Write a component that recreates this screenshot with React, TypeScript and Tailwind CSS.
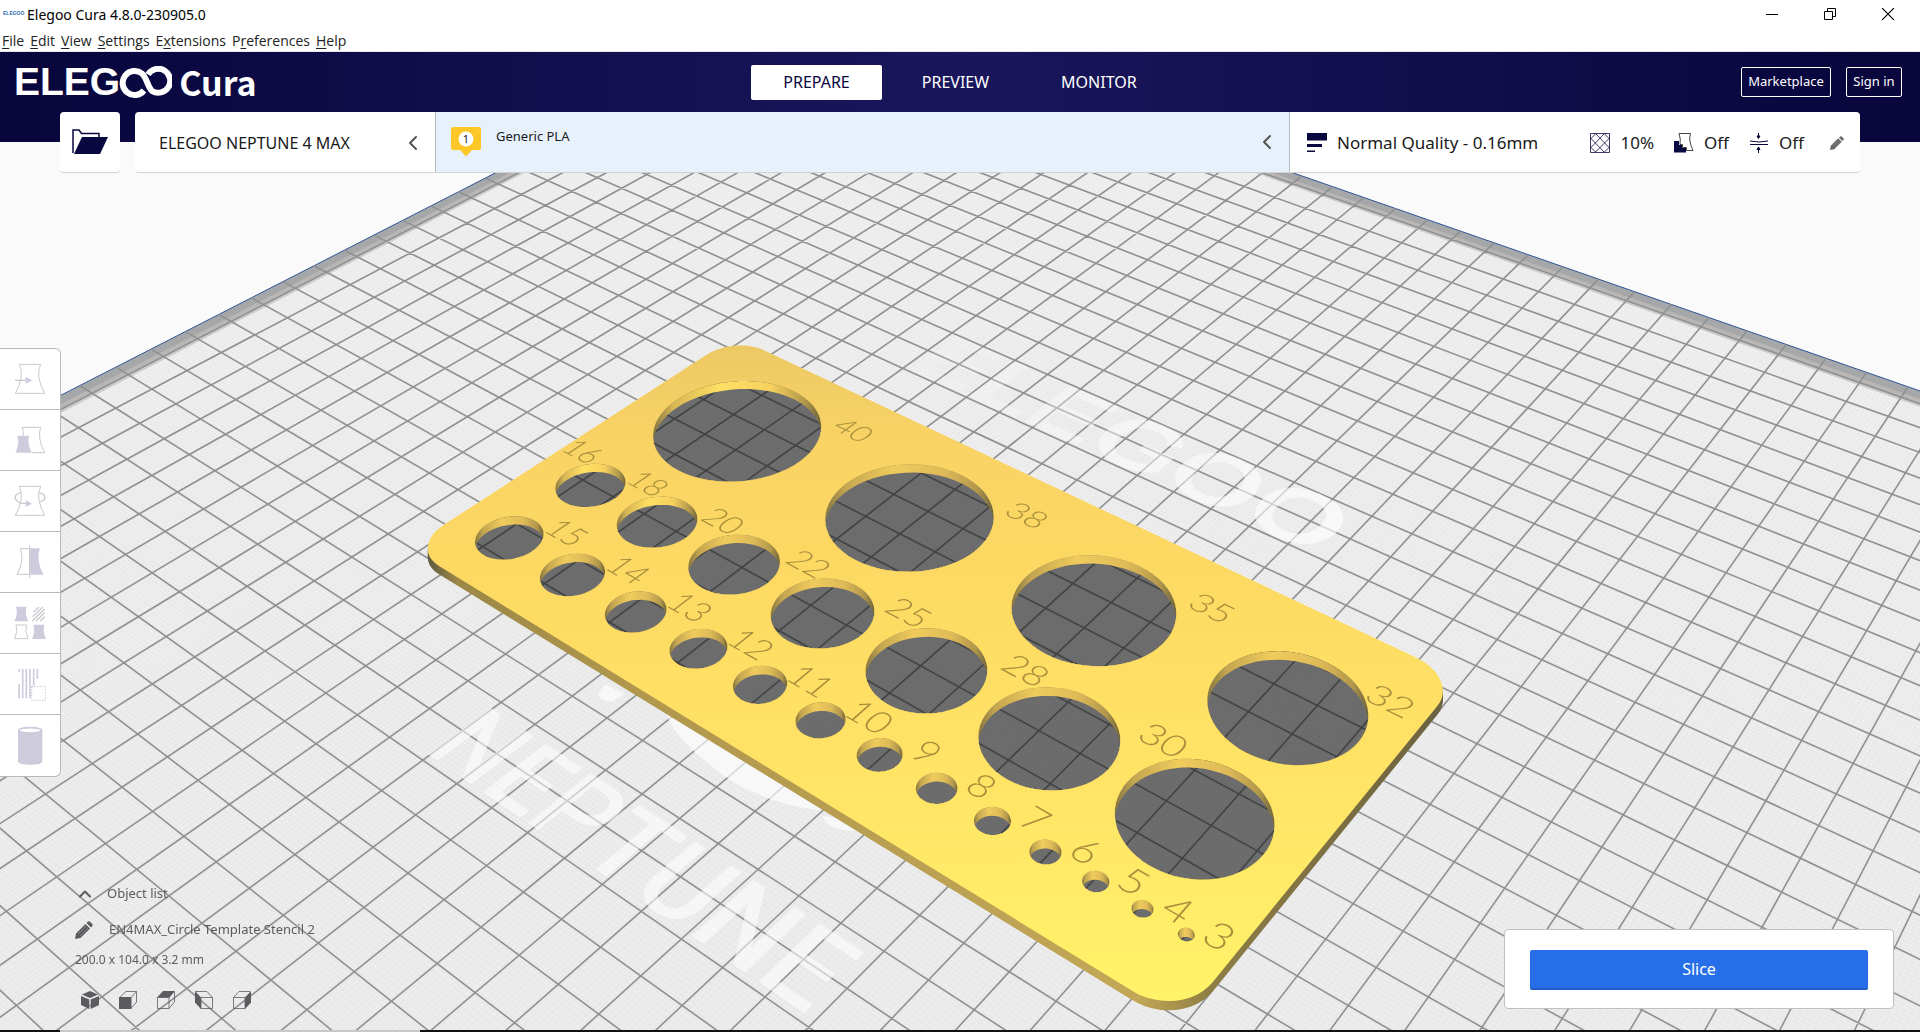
import { ReactNode } from 'react';
import { ChevronLeft, ChevronUp } from 'lucide-react';

type Point = [number, number];

// build plate -> screen, 1 unit on the plate is 10 mm
const CAMERA = [22.8768565, -38.702614, 78.5145068, 10.8865144, 14.0188128, 427.671322, -0.0105703514, -0.0135649169];

const project = (u: number, v: number): Point => {
	const w = CAMERA[6] * u + CAMERA[7] * v + 1;
	return [
		(CAMERA[0] * u + CAMERA[1] * v + CAMERA[2]) / w,
		(CAMERA[3] * u + CAMERA[4] * v + CAMERA[5]) / w,
	];
};

const toPath = (points: Point[]) => 'M' + points.map((p) => `${p[0].toFixed(1)} ${p[1].toFixed(1)}`).join('L') + 'Z';

// moves a point of the model's top face down by a part of its thickness
const sink = (p: Point, amount: number): Point => [p[0], p[1] + amount * (8 + (p[1] - 350) * 0.002)];

const line = (a: Point, b: Point) => `M${a[0].toFixed(1)} ${a[1].toFixed(1)}L${b[0].toFixed(1)} ${b[1].toFixed(1)}`;

const BED = { left: -1.53, right: 50, far: -28.55, near: 16 };

const rect = (left: number, far: number) =>
	toPath([project(left, far), project(BED.right, far), project(BED.right, BED.near), project(left, BED.near)]);

const majorGrid = (() => {
	let d = '';
	for (let u = -1; u <= BED.right; u++) d += line(project(u, BED.far), project(u, BED.near));
	for (let v = -28; v <= BED.near; v++) d += line(project(BED.left, v), project(BED.right, v));
	return d;
})();

const minorGrid = (() => {
	let d = '';
	for (let i = -8; i <= 480; i++) d += line(project(i / 10, -27.9), project(i / 10, BED.near));
	for (let i = -278; i <= 160; i++) d += line(project(-0.9, i / 10), project(BED.right, i / 10));
	return d;
})();

const plate = (() => {
	const [l, r, t, b, radius] = [9.73, 29.91, -12.47, -1.98, 1];
	const corners = [
		[r - radius, b - radius, 0],
		[l + radius, b - radius, 90],
		[l + radius, t + radius, 180],
		[r - radius, t + radius, 270],
	];
	return corners.flatMap(([cu, cv, start]) =>
		Array.from({ length: 13 }, (_, k) => {
			const a = ((start + k * 7.5) * Math.PI) / 180;
			return project(cu + radius * Math.cos(a), cv + radius * Math.sin(a));
		})
	);
})();

interface Hole {
	size: number;
	u: number;
	v: number;
	label: Point;
}

const row = (v: number, items: Point[], offset: (r: number) => Point): Hole[] =>
	items.map(([size, u]) => {
		const [du, dv] = offset(size / 20);
		return { size, u, v, label: [u + du, v + dv] };
	});

const holes: Hole[] = [
	{ size: 40, u: 12.49, v: -9.61, label: [14.69, -11.3] },
	{ size: 38, u: 17.78, v: -9.61, label: [19.85, -11.27] },
	{ size: 35, u: 22.82, v: -9.61, label: [24.79, -11.18] },
	{ size: 32, u: 27.54, v: -9.61, label: [29.1, -11.02] },
	...row(
		-5.98,
		[[16, 11.28], [18, 13.43], [20, 15.79], [22, 18.35], [25, 21.17], [28, 24.27], [30, 27.64]],
		(r) => [-0.53 - 0.68 * r, -0.17 - 0.77 * r]
	),
	...row(
		-3.57,
		[[15, 11.23], [14, 13.26], [13, 15.2], [12, 17.04], [11, 18.77], [10, 20.4], [9, 21.93], [8, 23.35], [7, 24.69], [6, 25.92], [5, 27.05], [4, 28.07], [3, 29]],
		(r) => [0.38 + 0.66 * r, -0.2 - 0.95 * r]
	),
];

const ring = ({ size, u, v }: Hole) =>
	Array.from({ length: 60 }, (_, k) => {
		const a = (k * Math.PI) / 30;
		return project(u + (size / 20) * Math.cos(a), v + (size / 20) * Math.sin(a));
	});

const rings = holes.map(ring);
const ringPaths = rings.map(toPath).join('');

const localMatrix = (u: number, v: number) => {
	const w = CAMERA[6] * u + CAMERA[7] * v + 1;
	const [x, y] = project(u, v);
	const m = [
		CAMERA[0] - x * CAMERA[6],
		CAMERA[3] - y * CAMERA[6],
		CAMERA[1] - x * CAMERA[7],
		CAMERA[4] - y * CAMERA[7],
	].map((n) => (n / w / 40).toFixed(4));
	return `matrix(${m.join(' ')} ${x.toFixed(1)} ${y.toFixed(1)})`;
};

// 40px of flat text cover one unit of the plate
const bedMatrix = (u: number, v: number) => {
	const [a, b, c, d, e, f, g, h] = CAMERA;
	const x = a * u + b * v + c;
	const y = d * u + e * v + f;
	const w = g * u + h * v + 1;
	return `matrix3d(${[a / 40, d / 40, 0, g / 40, b / 40, e / 40, 0, h / 40, 0, 0, 1, 0, x, y, 0, w].join(',')})`;
};

const BedText = ({ u, v, className, children }: { u: number; v: number; className: string; children: ReactNode }) => (
	<div
		className={`absolute left-0 top-0 origin-top-left leading-none whitespace-nowrap ${className}`}
		style={{ transform: bedMatrix(u, v) }}
	>
		{children}
	</div>
);

const Scene = () => (
	<svg
		className="absolute inset-0 h-full w-full"
		viewBox="0 142 1920 888"
		preserveAspectRatio="xMidYMin slice"
		role="img"
		aria-label="3D view of the build plate"
	>
		<defs>
			<linearGradient id="top" x1="0" y1="345" x2="0" y2="1000" gradientUnits="userSpaceOnUse">
				<stop offset="0" stopColor="#edc964" />
				<stop offset="0.15" stopColor="#f9d364" />
				<stop offset="0.4" stopColor="#fedb63" />
				<stop offset="0.7" stopColor="#ffe566" />
				<stop offset="1" stopColor="#fff369" />
			</linearGradient>
			<linearGradient id="side" x1="427" y1="0" x2="1443" y2="0" gradientUnits="userSpaceOnUse">
				<stop offset="0" stopColor="#5d583f" />
				<stop offset="0.03" stopColor="#9c8746" />
				<stop offset="0.2" stopColor="#b0974c" />
				<stop offset="0.7" stopColor="#c2a756" />
				<stop offset="0.77" stopColor="#8f7e44" />
				<stop offset="1" stopColor="#6c6240" />
			</linearGradient>
			<linearGradient id="wall">
				<stop offset="0" stopColor="#86763f" />
				<stop offset="0.12" stopColor="#c4a650" />
				<stop offset="0.4" stopColor="#f0cb5c" />
				<stop offset="0.7" stopColor="#dfbb58" />
				<stop offset="0.9" stopColor="#b3984b" />
				<stop offset="1" stopColor="#6f6439" />
			</linearGradient>
			<linearGradient id="far-wall">
				<stop offset="0" stopColor="#86763f" />
				<stop offset="0.12" stopColor="#d8b755" />
				<stop offset="0.4" stopColor="#ffe063" />
				<stop offset="0.7" stopColor="#f6d05f" />
				<stop offset="0.9" stopColor="#b3984b" />
				<stop offset="1" stopColor="#6f6439" />
			</linearGradient>
		</defs>

		<path d={rect(BED.left, BED.far)} fill="#a6a7a9" stroke="#2f5597" strokeWidth="1" />
		<path d={rect(-1.2, -28.2)} fill="#b9b6b3" />
		<path d={rect(-1, -28)} fill="#cbcbcc" />
		<path d={rect(-0.87, -27.87)} fill="#e9e9ea" />
		<path d={minorGrid} fill="none" stroke="#fff" strokeOpacity="0.28" strokeWidth="1" />
		<path d={majorGrid} fill="none" stroke="#8f9092" strokeWidth="1.6" />

		<g fill="#fff" fillOpacity="0.65">
			<path d="M666 714C676 738 698 757 733 782C765 800 795 808 822 810L822 800Z" />
			<path d="M822 816C828 827 838 831 857 831L840 818Z" />
			<path d="M605 684L598 695Q604 703 614 701L624 694Z" />
		</g>
		<foreignObject x="0" y="0" width="1920" height="1032" className="overflow-visible">
			<div className="relative h-[1032px]">
				<BedText
					u={14}
					v={-16.4}
					className="bg-linear-to-r from-white/10 via-white/45 to-white/65 bg-clip-text font-['Liberation_Sans'] text-[110px] font-bold text-transparent"
				>
					ELEGOO
				</BedText>
				<BedText u={14.8} v={-0.04} className="font-['Roboto'] text-[90px] font-medium text-white/55">
					NEPTUNE
				</BedText>
			</div>
		</foreignObject>

		<path d={ringPaths} fill="#000" fillOpacity="0.54" />
		{rings.map((points, i) => (
			<path
				key={holes[i].size}
				d={toPath(points) + toPath(points.map((p) => sink(p, 1)))}
				fill={points[0][1] < 540 ? 'url(#far-wall)' : 'url(#wall)'}
				fillRule="evenodd"
			/>
		))}
		{[1, 0.75, 0.5, 0.25].map((amount) => (
			<path
				key={amount}
				d={toPath(plate.map((p) => sink(p, amount))) + ringPaths}
				fill="url(#side)"
				fillRule="evenodd"
			/>
		))}
		<path d={toPath(plate) + ringPaths} fill="url(#top)" fillRule="evenodd" />

		{holes.map(({ size, label }) => (
			<text
				key={size}
				transform={localMatrix(label[0], label[1])}
				y="12"
				textAnchor="middle"
				className="font-['Lato'] text-[33px] font-light"
				fill="#a98f3d"
			>
				{size}
			</text>
		))}
	</svg>
);

const Logo = () => (
	<div className="flex items-center gap-[7px] text-white">
		<div className="flex items-center">
			<span className="font-['Liberation_Sans'] text-[39px] leading-[40px] font-bold">ELEG</span>
			<svg
				className="-ml-1"
				width="56"
				height="32"
				viewBox="0 0 56 32"
				fill="none"
				stroke="currentColor"
				strokeWidth="6"
				aria-label="OO"
			>
				<path d="M28 24.500A12 12 0 1 1 26 7.500C31 12 31 20 36 25A12 12 0 1 0 32 8.500" />
			</svg>
		</div>
		<span className="font-['Noto_Sans_CJK_SC'] text-[34px] leading-[40px] font-bold">Cura</span>
	</div>
);

const titleButton = 'flex h-7 w-[58px] items-center justify-center';

const TitleBar = () => (
	<div className="flex h-7 items-center bg-white pl-[3px] text-black">
		<span className="w-6 font-['Liberation_Sans'] text-[5px] font-bold text-[#2c6fb0]">ELEGOO</span>
		<h1 className="pt-0.5 text-sm">Elegoo Cura 4.8.0-230905.0</h1>
		<div className="ml-auto flex pr-[3px]">
			<button className={titleButton} aria-label="Minimize">
				<svg width="12" height="12" stroke="currentColor"><path d="M0 6.500H12" /></svg>
			</button>
			<button className={titleButton} aria-label="Restore">
				<svg width="12" height="12" fill="none" stroke="currentColor">
					<path d="M.5 3.500H8.500V11.500H.5ZM3.500 3.500V.5H11.500V8.500H8.500" />
				</svg>
			</button>
			<button className={titleButton} aria-label="Close">
				<svg width="12" height="12" stroke="currentColor" strokeWidth="1.200"><path d="M0 0L12 12M12 0L0 12" /></svg>
			</button>
		</div>
	</div>
);

const menus = [
	['', 'F', 'ile'],
	['', 'E', 'dit'],
	['', 'V', 'iew'],
	['', 'S', 'ettings'],
	['E', 'x', 'tensions'],
	['P', 'r', 'eferences'],
	['', 'H', 'elp'],
];

const MenuBar = () => (
	<nav className="flex h-6 items-center gap-[6px] border-b border-gray-200 bg-white pt-0.5 pl-[2px] font-['Open_Sans'] text-sm text-[#222]">
		{menus.map(([before, key, after]) => (
			<button key={key + after}>
				{before}
				<span className="underline underline-offset-2">{key}</span>
				{after}
			</button>
		))}
	</nav>
);

const Header = () => (
	<header className="h-[90px] bg-linear-to-r from-[#08063c] via-[#1a165c] to-[#08063c]">
		<div className="grid h-[60px] grid-cols-[1fr_auto_1fr] items-center pr-[18px] pl-[14px]">
			<Logo />
			<div className="flex gap-2 pl-1 text-base text-white">
				<button className="h-[35px] rounded-xs bg-white px-8 text-[#08073f]">PREPARE</button>
				<button className="h-[35px] px-8">PREVIEW</button>
				<button className="h-[35px] px-8">MONITOR</button>
			</div>
			<div className="flex justify-end gap-[15px] text-[13px] text-white">
				<button className="h-[30px] w-[90px] rounded-xs border border-white">Marketplace</button>
				<button className="h-[30px] w-[56px] rounded-xs border border-white">Sign in</button>
			</div>
		</div>
	</header>
);

const Pencil = ({ size }: { size: number }) => (
	<svg width={size} height={size} viewBox="0 0 18 18" fill="currentColor">
		<path d="M0 18L1 12.500L10.500 3L15 7.500L5.500 17ZM11.500 2L13.200.5Q14 0 14.800.5L17.500 3.200Q18 4 17.500 4.800L16 6.500Z" />
		<path d="M3 13L11 5M5 15L13 7" stroke="#fff" strokeOpacity="0.35" strokeWidth="0.7" />
	</svg>
);

const StageBar = () => (
	<section className="relative -mt-[30px] flex h-[61px] gap-[15px] px-[60px] text-[#191919]">
		<button
			className="flex w-[60px] shrink-0 items-center justify-center rounded-sm border-b border-[#d3d3d5] bg-white"
			aria-label="Open file"
		>
			<svg width="36" height="26" viewBox="0 0 36 26">
				<path d="M1 24V1H7L9.500 4.500H27V9" fill="none" stroke="#08073f" strokeWidth="1.500" />
				<path d="M10 8H36L28 25H2Z" fill="#08073f" />
			</svg>
		</button>
		<div className="flex flex-1 overflow-hidden rounded-sm border-b border-[#d3d3d5] bg-white">
			<button className="flex w-[301px] items-center justify-between border-r border-[#b4bac2] pt-0.5 pr-[10px] pl-6 text-base">
				ELEGOO NEPTUNE 4 MAX
				<ChevronLeft className="h-6 w-6 text-[#555]" strokeWidth={2} />
			</button>
			<button className="flex flex-1 items-center bg-[#e6f1fb] pr-[10px] pl-[15px] text-[13px]">
				<svg width="30" height="30" viewBox="0 0 30 30">
					<path d="M2 0H28Q30 0 30 2V21Q30 23 28 23H21L15 29.500L9 23H2Q0 23 0 21V2Q0 0 2 0Z" fill="#fdc728" />
					<circle cx="15" cy="12" r="7.500" fill="#fff" />
					<text x="15" y="16" textAnchor="middle" fontSize="11" fill="#222">1</text>
				</svg>
				<span className="ml-[15px] pb-[10px]">Generic PLA</span>
				<ChevronLeft className="ml-auto h-6 w-6 text-[#555]" strokeWidth={2} />
			</button>
			<button className="flex w-[571px] items-center border-l border-[#b4bac2] pt-0.5 pr-4 pl-[17px] text-[17px]">
				<svg width="20" height="20" fill="#08073f">
					<path d="M0 0H20V7.500H0ZM0 11H15V14H0ZM0 17.500H8V19H0Z" />
				</svg>
				<span className="ml-[10px]">Normal Quality - 0.16mm</span>
				<span className="ml-auto flex items-center gap-[10px]">
					<svg width="20" height="20" viewBox="0 0 20 20" fill="none" stroke="#3a3866">
						<path d="M.5.5H19.500V19.500H.5ZM.5 6L6 .5M.5 15L14.500.5M5 19.500L19.500 5M14 19.500L19.500 14M.5 5L14.500 19.500M5.500.5L19.500 15M14 .5L19.500 6M.5 14L6 19.500" />
					</svg>
					10%
				</span>
				<span className="ml-5 flex items-center gap-[10px]">
					<svg width="20" height="20" viewBox="0 0 20 20">
						<path d="M0 8H5V12H8V15H12V19.500H0Z" fill="#08073f" />
						<path d="M5 .5H16.500Q14 7 19 17.500H12.500V14.500H8.500V11.500H6Q7 6 5 .5Z" fill="#fff" stroke="#444" />
					</svg>
					Off
				</span>
				<span className="ml-5 flex items-center gap-[10px]">
					<svg width="20" height="20" viewBox="0 0 20 20" fill="#08073f" stroke="#08073f">
						<path d="M1 8Q10 10 19 8M1 11.500H19" fill="none" />
						<path d="M9.500 0V3M8 3H11L9.500 5.500ZM9.500 20V17M8 16.500H11L9.500 14Z" />
					</svg>
					Off
				</span>
				<span className="ml-[26px] text-[#666]"><Pencil size={14} /></span>
			</button>
		</div>
	</section>
);

const vase = 'M13 1H77Q60 36 89 88H1Q30 36 13 1Z';

const tools: { name: string; icon: ReactNode }[] = [
	{
		name: 'Move',
		icon: (
			<>
				<path d={vase} />
				<path d="M0 49H34" strokeWidth="4" />
				<path d="M32 39L52 49L32 59Z" fill="#cdcbdc" stroke="none" />
			</>
		),
	},
	{
		name: 'Scale',
		icon: (
			<>
				<path d="M25 32Q27 20 21 7H77Q66 40 89 83H50" />
				<path d="M7 32H42Q36 56 50 83H1Q15 56 7 32Z" fill="#cdcbdc" stroke="none" />
			</>
		),
	},
	{
		name: 'Rotate',
		icon: (
			<>
				<path d={vase} />
				<path d="M18 20C-10 24 -4 53 34 53M70 20C98 24 92 44 76 47" strokeWidth="4" />
				<path d="M32 43L51 53L32 63Z" fill="#cdcbdc" stroke="none" />
			</>
		),
	},
	{
		name: 'Mirror',
		icon: (
			<>
				<path d="M44 5H16Q30 40 6 82H44" />
				<path d="M44 4H75Q62 42 86 83H44Z" fill="#cdcbdc" stroke="none" />
				<path d="M44 -5V94" />
			</>
		),
	},
	{
		name: 'Per model settings',
		icon: (
			<>
				<path d="M3 -4H35Q28 16 40 40H-2Q10 16 3 -4Z" fill="#cdcbdc" stroke="none" />
				<path d="M3 51H35Q28 70 39 92H-1Q10 70 3 51Z" />
				<path d="M55 50H88Q82 70 93 93H51Q62 70 55 50Z" fill="#cdcbdc" stroke="none" />
				<path d="M56 12L72 -3M53 26L84 -3M52 39L89 3M63 39L89 14M75 39L90 26" strokeWidth="4" />
			</>
		),
	},
	{
		name: 'Support blocker',
		icon: (
			<>
				<path d="M13 0V10M23 0V88M34 0V88M45 0V88M56 0V50M67 0V30M12 45V88" stroke="#cdcbdc" strokeWidth="5" />
				<path d="M50 53H91V94H50Z" strokeDasharray="4 4" />
			</>
		),
	},
	{
		name: 'Cylinder',
		icon: (
			<>
				<path d="M9 -3V92Q12 101 46 101Q80 101 82 92V-3Z" fill="#cdcbdc" stroke="none" />
				<ellipse cx="45.500" cy="-2" rx="34" ry="8" fill="#fff" stroke="#cdcbdc" strokeWidth="5" />
			</>
		),
	},
];

const Toolbar = () => (
	<nav className="mt-[175px] flex w-[61px] flex-col divide-y divide-[#b9b9bc] rounded-r-md border border-l-0 border-[#b9b9bc] bg-white">
		{tools.map(({ name, icon }) => (
			<button key={name} className="flex h-[61px] items-center justify-center" aria-label={name}>
				<svg width="32" height="40" viewBox="-3 -15 96 120" fill="none" stroke="#c9c8cf" strokeWidth="3">
					{icon}
				</svg>
			</button>
		))}
	</nav>
);

const views: { name: string; icon: ReactNode }[] = [
	{
		name: '3D view',
		icon: <path d="M9 0L17 3.500L9 7L1 3.500ZM0 5L8.300 8.500V18L0 14ZM18 5L9.700 8.500V18L18 14Z" fill="currentColor" stroke="none" />,
	},
	{
		name: 'Front view',
		icon: (
			<>
				<path d="M.5 6.500L7 .5H17.500V11L12 17.500M12 6.500L17.500.5" />
				<path d="M0 6H12.500V18H0Z" fill="currentColor" stroke="none" />
			</>
		),
	},
	{
		name: 'Top view',
		icon: (
			<>
				<path d="M.5 6.500H12V17.500H.5ZM12 17.500L17.500 11V.5" />
				<path d="M0 6.500L6 0H18L12.500 6.500Z" fill="currentColor" stroke="none" />
			</>
		),
	},
	{
		name: 'Left view',
		icon: (
			<>
				<path d="M6 6.500H17.500V17.500H6ZM.5.5H12L17.500 6.500" />
				<path d="M0 0L6 6.500V18L0 11.500Z" fill="currentColor" stroke="none" />
			</>
		),
	},
	{
		name: 'Right view',
		icon: (
			<>
				<path d="M.5 6.500H12V17.500H.5ZM.5 6.500L6 .5H17" />
				<path d="M12 6.500L18 0V11.500L12 18Z" fill="currentColor" stroke="none" />
			</>
		),
	},
];

const ObjectPanel = () => (
	<div className="pl-[75px] text-[13px] text-[#5c5c60]">
		<button className="flex h-[38px] items-center">
			<ChevronUp className="h-5 w-5" strokeWidth={2.5} />
			<span className="ml-3">Object list</span>
		</button>
		<button className="flex h-[34px] items-center">
			<Pencil size={18} />
			<span className="ml-4">EN4MAX_Circle Template Stencil 2</span>
		</button>
		<p className="h-[26px] text-xs leading-[26px]">200.0 x 104.0 x 3.2 mm</p>
		<div className="mt-[18px] flex gap-5 pl-[6px]">
			{views.map(({ name, icon }) => (
				<button key={name} aria-label={name}>
					<svg width="18" height="18" viewBox="0 0 18 18" fill="none" stroke="currentColor" strokeWidth="0.800">
						{icon}
					</svg>
				</button>
			))}
		</div>
	</div>
);

const SlicePanel = () => (
	<div className="mr-[26px] w-[390px] rounded-sm border border-[#c0c0c3] bg-white px-[25px] pt-5 pb-[18px]">
		<button className="h-10 w-full rounded-xs border-b-2 border-[#1f5dc4] bg-[#266fe8] text-base text-white">Slice</button>
	</div>
);

export default function App() {
	return (
		<div className="flex min-h-screen flex-col bg-[#fafafa] font-['Noto_Sans',sans-serif]">
			<TitleBar />
			<MenuBar />
			<Header />
			<main className="relative flex flex-1 flex-col">
				<Scene />
				<StageBar />
				<div className="relative flex flex-1 flex-col justify-between gap-8">
					<Toolbar />
					<div className="flex items-end justify-between pb-[21px]">
						<ObjectPanel />
						<SlicePanel />
					</div>
				</div>
			</main>
			<footer className="flex h-[2px] bg-[#111]">
				<div className="ml-[60px] w-[360px] bg-[#c8c8c8]" />
			</footer>
		</div>
	);
}
